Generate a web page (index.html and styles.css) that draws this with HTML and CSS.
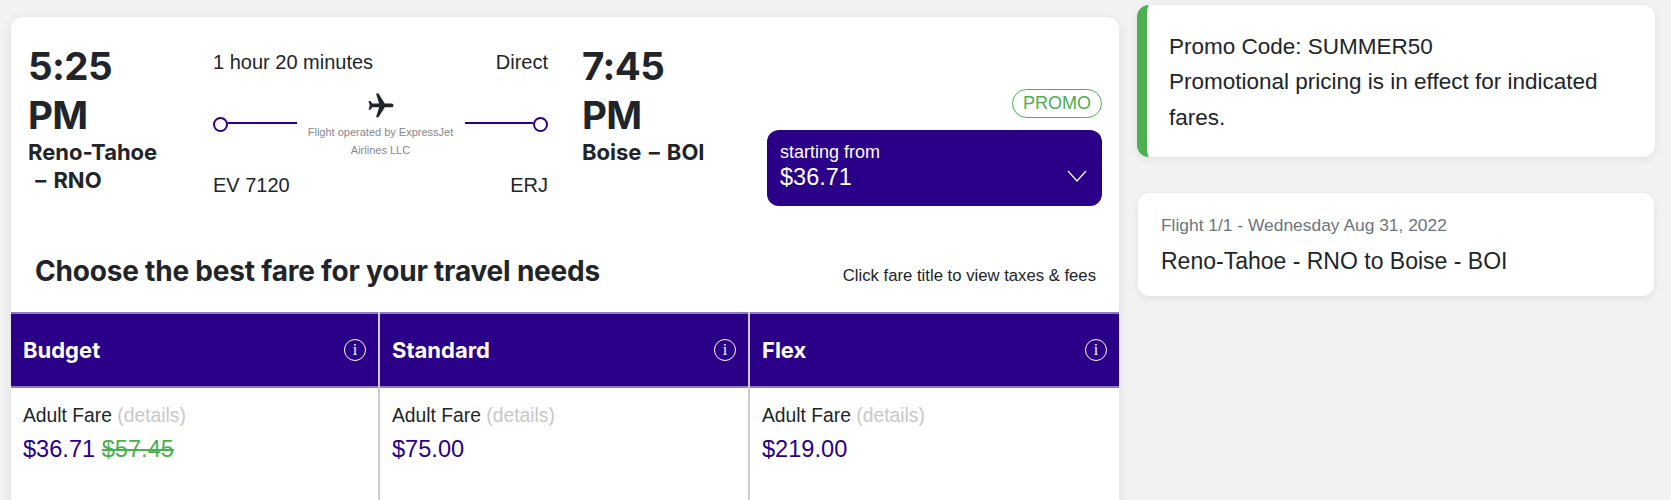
FILE: index.html
```html
<!DOCTYPE html>
<html lang="en">
<head>
<meta charset="utf-8">
<title>Choose a fare</title>
<link rel="stylesheet" href="styles.css">
</head>
<body>
<main class="page">
  <section class="flight-card">
    <div class="flight-row">
      <div class="stop stop-from">
        <div class="time">5:25 PM</div>
        <div class="place">Reno-Tahoe<br>&nbsp;– RNO</div>
      </div>
      <div class="route">
        <div class="route-line"><span>1 hour 20 minutes</span><span>Direct</span></div>
        <div class="track">
          <div class="leg"><i class="dot"></i><i class="rule"></i></div>
          <div class="operator">
            <svg class="plane" viewBox="0 0 24 24" aria-hidden="true"><path transform="rotate(90 12 12)" d="M21 16v-2l-8-5V3.5c0-.83-.67-1.5-1.5-1.5S10 2.67 10 3.5V9l-8 5v2l8-2.5V19l-2 1.5V22l3.5-1 3.5 1v-1.5L13 19v-5.5l8 2.5z"/></svg>
            <p>Flight operated by ExpressJet Airlines LLC</p>
          </div>
          <div class="leg"><i class="rule"></i><i class="dot"></i></div>
        </div>
        <div class="route-line"><span>EV 7120</span><span>ERJ</span></div>
      </div>
      <div class="stop stop-to">
        <div class="time">7:45 PM</div>
        <div class="place">Boise – BOI</div>
      </div>
      <div class="price-col">
        <span class="promo-pill">PROMO</span>
        <button class="price-btn" type="button">
          <span class="price-text"><span class="from">starting from</span><span class="amount">$36.71</span></span>
          <svg class="chevron" viewBox="0 0 20 12" aria-hidden="true"><path d="M1 1l9 10 9-10"/></svg>
        </button>
      </div>
    </div>
    <div class="fare-head">
      <h2>Choose the best fare for your travel needs</h2>
      <span class="hint">Click fare title to view taxes &amp; fees</span>
    </div>
    <div class="fares">
      <article class="fare">
        <header><h3>Budget</h3><span class="info">i</span></header>
        <div class="fare-body">
          <div class="fare-label">Adult Fare <span class="details">(details)</span></div>
          <div class="fare-price">$36.71 <s>$57.45</s></div>
        </div>
      </article>
      <article class="fare">
        <header><h3>Standard</h3><span class="info">i</span></header>
        <div class="fare-body">
          <div class="fare-label">Adult Fare <span class="details">(details)</span></div>
          <div class="fare-price">$75.00</div>
        </div>
      </article>
      <article class="fare">
        <header><h3>Flex</h3><span class="info">i</span></header>
        <div class="fare-body">
          <div class="fare-label">Adult Fare <span class="details">(details)</span></div>
          <div class="fare-price">$219.00</div>
        </div>
      </article>
    </div>
  </section>
  <aside class="side">
    <div class="promo-card">Promo Code: SUMMER50<br>Promotional pricing is in effect for indicated fares.</div>
    <div class="summary-card">
      <div class="summary-date">Flight 1/1 - Wednesday Aug 31, 2022</div>
      <div class="summary-route">Reno-Tahoe - RNO to Boise - BOI</div>
    </div>
  </aside>
</main>
</body>
</html>
```
FILE: styles.css
```css
* { box-sizing: border-box; }
html, body { margin: 0; height: 500px; overflow: hidden; }
body { background: #f2f2f2; color: #212529; font-family: "Liberation Sans", Arial, sans-serif; }
.page { display: flex; align-items: flex-start; gap: 18px; height: 500px; overflow: hidden; padding: 5px 16px 0 11px; }

.flight-card {
  flex: 0 0 1108px; height: 495px; margin-top: 12px; background: #fff;
  border-radius: 12px 12px 0 0; box-shadow: 0 2px 12px rgba(0,0,0,.08);
}
.flight-row { display: flex; height: 220px; padding: 25px 17px 0; }
.stop { font-family: Inter, sans-serif; font-weight: 700; font-feature-settings: "calt" 0; }
.stop-from { flex: 0 0 185px; }
.stop-to { flex: 0 0 185px; margin-left: 34px; }
.time { width: 120px; font-size: 38.5px; line-height: 49px; letter-spacing: -.6px; }
.place { margin-top: -1px; font-size: 22px; line-height: 27.5px; word-spacing: 2px; }

.route { flex: 0 0 335px; display: flex; flex-direction: column; padding-top: 8px; font-size: 20px; line-height: 24px; }
.route-line { display: flex; justify-content: space-between; }
.track { display: flex; height: 99px; }
.leg { flex: 1; display: flex; align-items: center; height: 15px; margin-top: 43px; }
.dot { flex: none; width: 15px; height: 15px; border: 2px solid #2a0088; border-radius: 50%; }
.rule { flex: 1; height: 2px; background: #2a0088; margin-top: -3px; }
.operator { flex: 0 0 168px; padding-top: 17px; text-align: center; color: #85888f; }
.operator p { margin: 0; font-size: 11px; line-height: 17.5px; }
.plane { display: block; width: 30px; height: 30px; margin: 0 auto 3px; fill: #212529; }

.price-col { flex: 0 0 335px; display: flex; flex-direction: column; align-items: flex-end; padding-top: 47px; }
.promo-pill {
  width: 90px; height: 29px; text-align: center; border: 1.5px solid #4caf50; border-radius: 15px;
  color: #4caf50; font-size: 18px; line-height: 26px;
}
.price-btn {
  flex: none; width: 335px; height: 76px; margin-top: 12px; padding: 0 13px; display: flex; align-items: center;
  justify-content: space-between; background: #2a0088; border: 0; border-radius: 12px; color: #fff;
  font-family: inherit; text-align: left;
}
.price-text { display: flex; flex-direction: column; padding-bottom: 6px; }
.from { font-size: 18px; line-height: 24px; }
.amount { font-size: 23.5px; line-height: 27px; }
.chevron { width: 20px; height: 12px; margin: 15px 2px 0 0; fill: none; stroke: #fff; stroke-width: 1.2; }

.fare-head { display: flex; align-items: baseline; justify-content: space-between; height: 75px; padding: 16px 23px 0 24px; }
.fare-head h2 { margin: 0; font-family: Inter, sans-serif; font-size: 28px; line-height: 36px; letter-spacing: -.2px; font-weight: 700; }
.hint { font-size: 16.7px; }

.fares { display: grid; grid-template-columns: 369px 370px 369px; height: 200px; }
.fare { border-right: 2px solid #cccccc; }
.fare:last-child { border-right: 0; }
.fare header {
  display: flex; align-items: center; justify-content: space-between; height: 76px; padding: 0 12px;
  background: #2a0088; border-top: 2px solid #8e7bc4; border-bottom: 2px solid #8e7bc4; color: #fff;
}
.fare h3 { margin: 0; font-family: Inter, sans-serif; font-size: 22px; font-weight: 700; }
.info {
  width: 22px; height: 22px; display: flex; align-items: center; justify-content: center;
  border: 1.5px solid #fff; border-radius: 50%; font-family: "Liberation Serif", serif; font-size: 16px;
}
.fare-body { padding: 15px 12px 0; }
.fare-label { font-size: 19.3px; line-height: 26px; }
.details { color: #c8c8c8; }
.fare-price { margin-top: 5px; font-size: 23.6px; line-height: 30px; color: #2a0088; }
.fare-price s { color: #4caf50; }

.side { flex: 1; display: flex; flex-direction: column; gap: 36px; }
.promo-card {
  height: 152px; padding: 24px 30px 0 22px; background: #fff; border-left: 10px solid #4caf50;
  border-radius: 12px; box-shadow: 0 2px 8px rgba(0,0,0,.08); font-size: 22.5px; line-height: 35.3px; color: #212529;
}
.summary-card {
  height: 103px; padding: 20px 23px 0; margin: 0 1px; background: #fff; border-radius: 12px;
  box-shadow: 0 2px 8px rgba(0,0,0,.08);
}
.summary-date { font-size: 17.4px; line-height: 24px; color: #6c757d; }
.summary-route { margin-top: 10px; font-size: 23px; line-height: 28px; }
```
